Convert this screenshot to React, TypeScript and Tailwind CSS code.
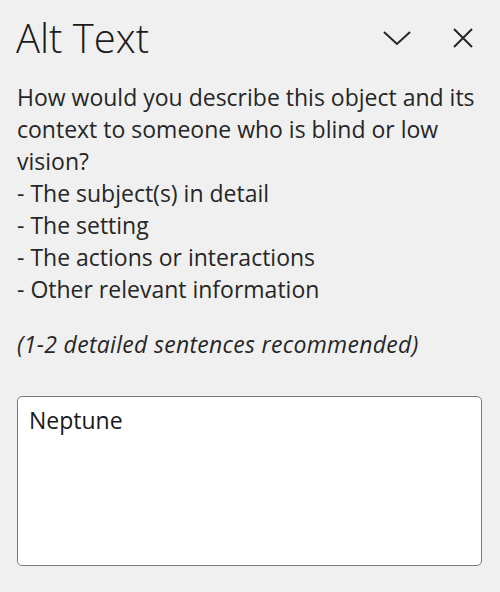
export default function App() {
  return (
    <div className="h-[592px] w-[500px] bg-[#f0f0f0] text-[#262626]" style={{ fontFamily: '"Open Sans", "Noto Sans", sans-serif' }}>
      <div className="flex items-center justify-between pl-[16px] pr-[26px] pt-[10px]">
        <h1 className="text-[40px] font-light leading-[56px] text-[#1a1a1a]">Alt Text</h1>
        <div className="flex items-center gap-[40px]">
          <svg width="30" height="18" viewBox="0 0 30 18" fill="none" stroke="#262626" strokeWidth="2">
            <path d="M2 3l13 12 13-12" />
          </svg>
          <svg width="22" height="22" viewBox="0 0 22 22" fill="none" stroke="#262626" strokeWidth="2">
            <path d="M2 2l18 18M20 2L2 20" />
          </svg>
        </div>
      </div>
      <div className="px-[17px] pt-[15px] text-[23px] leading-[32px]">
        <p>How would you describe this object and its context to someone who is blind or low vision?</p>
        <p>- The subject(s) in detail</p>
        <p>- The setting</p>
        <p>- The actions or interactions</p>
        <p>- Other relevant information</p>
        <p className="mt-[23px] italic tracking-[0.3px]">(1-2 detailed sentences recommended)</p>
        <div className="mt-[36px] h-[170px] w-[465px] rounded-[5px] border-[1.5px] border-[#7a7a7a] bg-white px-[11px] py-[7px] text-[#1a1a1a]">
          Neptune
        </div>
      </div>
    </div>
  );
}
